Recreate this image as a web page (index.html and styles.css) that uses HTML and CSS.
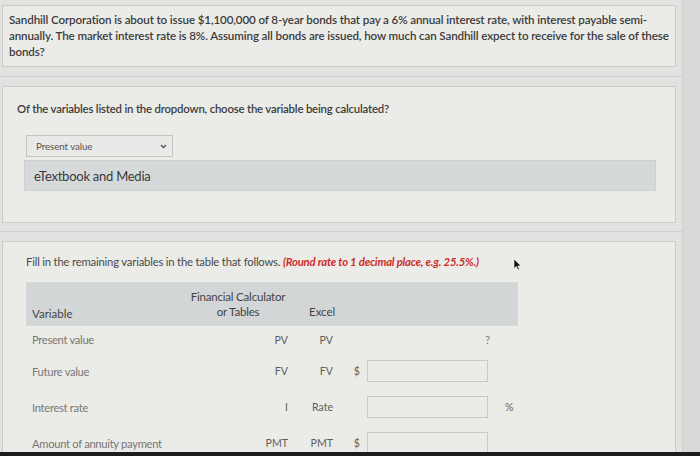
FILE: index.html
```html
<!DOCTYPE html>
<html>
<head>
<meta charset="utf-8">
<link rel="stylesheet" href="styles.css">
</head>
<body>
<div class="screen">
  <div class="main">
    <section class="card card-q1">
      <p class="question">Sandhill Corporation is about to issue $1,100,000 of 8-year bonds that pay a 6% annual interest rate, with interest payable semi-annually. The market interest rate is 8%. Assuming all bonds are issued, how much can Sandhill expect to receive for the sale of these bonds?</p>
    </section>
    <div class="sep"></div>
    <section class="card card-q2">
      <p class="prompt">Of the variables listed in the dropdown, choose the variable being calculated?</p>
      <div class="select">
        <span>Present value</span>
        <svg class="chev" width="7" height="5" viewBox="0 0 7 5"><path d="M1 1 L3.5 3.5 L6 1" fill="none" stroke="#555" stroke-width="1.4"/></svg>
      </div>
      <div class="media">eTextbook and Media</div>
    </section>
    <div class="sep sep2"></div>
    <section class="card card-q3">
      <p class="prompt p3">Fill in the remaining variables in the table that follows. <em class="hint">(Round rate to 1 decimal place, e.g. 25.5%.)</em></p>
      <div class="tbl">
        <div class="thead">
          <div class="th th-var">Variable</div>
          <div class="th th-calc">Financial Calculator<br>or Tables</div>
          <div class="th th-excel">Excel</div>
          <div class="th"></div>
          <div class="th"></div>
          <div class="th"></div>
        </div>
        <div class="row r1">
          <div class="lbl">Present value</div>
          <div class="v1">PV</div>
          <div class="v2">PV</div>
          <div class="cur"></div>
          <div class="inp-cell q">?</div>
          <div class="unit"></div>
        </div>
        <div class="row">
          <div class="lbl">Future value</div>
          <div class="v1">FV</div>
          <div class="v2">FV</div>
          <div class="cur">$</div>
          <div class="inp-cell"><div class="inp"></div></div>
          <div class="unit"></div>
        </div>
        <div class="row">
          <div class="lbl">Interest rate</div>
          <div class="v1">I</div>
          <div class="v2">Rate</div>
          <div class="cur"></div>
          <div class="inp-cell"><div class="inp"></div></div>
          <div class="unit">%</div>
        </div>
        <div class="row">
          <div class="lbl">Amount of annuity payment</div>
          <div class="v1">PMT</div>
          <div class="v2">PMT</div>
          <div class="cur">$</div>
          <div class="inp-cell"><div class="inp"></div></div>
          <div class="unit"></div>
        </div>
      </div>
    </section>
  </div>
  <div class="side"></div>
  <svg class="cursor" width="9" height="13" viewBox="0 0 9 13"><path d="M1 1 L1 10.5 L3.3 8.4 L5 12 L6.4 11.3 L4.8 7.9 L8 7.9 Z" fill="#111" stroke="#fff" stroke-width="0.6"/></svg>
  <div class="bezel"></div>
</div>
</body>
</html>
```
FILE: styles.css
```css
html, body {
  margin: 0;
  padding: 0;
}
body {
  width: 700px;
  height: 456px;
  overflow: hidden;
  background: #dcddda;
  font-family: Lato, "Open Sans", "Liberation Sans", sans-serif;
}
.screen {
  position: relative;
  width: 700px;
  height: 456px;
  display: flex;
  overflow: hidden;
  background: #e2e3e0;
}
.main {
  width: 682px;
  padding-top: 5px;
  display: flex;
  flex-direction: column;
  overflow: hidden;
}
.main > * {
  flex-shrink: 0;
}
.side {
  flex: 1;
  background: #d9dad7;
  border-left: 1px solid #cfd0cd;
}
.card {
  margin-left: 2px;
  width: 674px;
  background: #ebebe8;
  border: 1px solid #cbccc9;
  box-sizing: border-box;
}
.card-q1 {
  height: 62px;
  padding: 6px 0 0 6px;
}
.question {
  margin: 0;
  font-size: 11.6px;
  line-height: 16px;
  font-weight: 600;
  color: #3b3b3b;
  letter-spacing: -0.12px;
  width: 664px;
}
.sep {
  height: 9px;
  border-bottom: 1px solid #d0d1ce;
  margin-bottom: 9px;
}
.card-q2 {
  height: 137px;
  padding: 15px 0 0 14px;
}
.prompt {
  margin: 0;
  font-size: 11.4px;
  line-height: 14px;
  font-weight: 600;
  color: #3d3d3d;
  letter-spacing: -0.2px;
}
.select {
  margin: 19px 0 0 9px;
  width: 147px;
  height: 22px;
  box-sizing: border-box;
  border: 1px solid #c4c5c2;
  background: #e9eae7;
  display: flex;
  align-items: center;
  justify-content: space-between;
  padding: 0 5px 0 9px;
  font-size: 9.8px;
  color: #555;
  letter-spacing: -0.1px;
}
.chev {
  display: block;
}
.media {
  margin: 3px 0 0 7px;
  width: 632px;
  height: 31px;
  box-sizing: border-box;
  background: #d6d9d9;
  border: 1px solid #cdd0d0;
  padding: 0 0 0 9px;
  display: flex;
  align-items: center;
  font-size: 13px;
  color: #3a3a3a;
  letter-spacing: -0.25px;
}
.sep2 {
  height: 8px;
  margin-bottom: 9px;
}
.card-q3 {
  flex: 1 0 auto;
  padding: 13px 0 0 23px;
}
.p3 {
  font-size: 11.3px;
  font-weight: 400;
  color: #4a4a4a;
}
.hint {
  color: #cf2b2b;
  font-weight: 700;
  font-style: italic;
}
.tbl {
  margin-top: 13px;
  width: 492px;
}
.thead, .row {
  display: grid;
  grid-template-columns: 160px 104px 46px 31px 121px 30px;
  align-items: center;
}
.thead {
  height: 44px;
  background: #d3d6d7;
  align-items: end;
  font-size: 11.5px;
  color: #444;
}
.th {
  padding-bottom: 7px;
  line-height: 15px;
}
.th-var {
  padding-left: 6px;
  padding-bottom: 5px;
}
.th-calc {
  text-align: center;
  letter-spacing: -0.2px;
}
.th-excel {
  padding-left: 19px;
}
.row {
  height: 36px;
  font-size: 10.6px;
  color: #5e5e5e;
}
.row.r1 {
  height: 27px;
}
.lbl {
  padding-left: 6px;
  color: #777;
  font-size: 11.2px;
  letter-spacing: -0.3px;
}
.v1 {
  text-align: right;
  padding-right: 2px;
}
.v2 {
  text-align: right;
  padding-right: 3px;
}
.cur {
  text-align: right;
  padding-right: 7px;
}
.inp {
  height: 22px;
  box-sizing: border-box;
  border: 1px solid #c9cac7;
  background: #ebebe8;
}
.q {
  text-align: right;
  color: #777;
  margin-right: -2px;
}
.unit {
  padding-left: 17px;
  color: #666;
}
.cursor {
  position: absolute;
  left: 513px;
  top: 258px;
}
.bezel {
  position: absolute;
  left: 0;
  bottom: 0;
  width: 700px;
  height: 4px;
  background: #1c1c1c;
}
```
